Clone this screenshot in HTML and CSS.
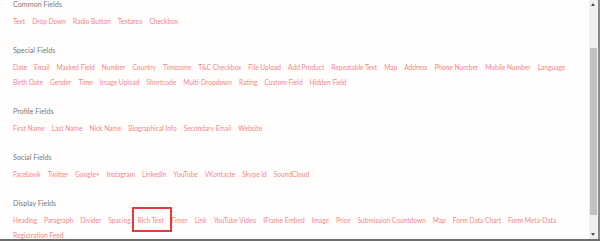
FILE: index.html
```html
<!DOCTYPE html>
<html>
<head>
<meta charset="utf-8">
<link rel="stylesheet" href="styles.css">
</head>
<body>
<div class="frame">
  <div class="content">
    <section class="group">
      <div class="title">Common Fields</div>
      <div class="items">
        <span>Text</span><span>Drop Down</span><span>Radio Button</span><span>Textarea</span><span>Checkbox</span>
      </div>
    </section>
    <section class="group">
      <div class="title">Special Fields</div>
      <div class="items">
        <span>Date</span><span>Email</span><span>Masked Field</span><span>Number</span><span>Country</span><span>Timezone</span><span>T&amp;C Checkbox</span><span>File Upload</span><span>Add Product</span><span>Repeatable Text</span><span>Map</span><span>Address</span><span>Phone Number</span><span>Mobile Number</span><span>Language</span><span>Birth Date</span><span>Gender</span><span>Time</span><span>Image Upload</span><span>Shortcode</span><span>Multi-Dropdown</span><span>Rating</span><span>Custom Field</span><span>Hidden Field</span>
      </div>
    </section>
    <section class="group">
      <div class="title">Profile Fields</div>
      <div class="items">
        <span>First Name</span><span>Last Name</span><span>Nick Name</span><span>Biographical Info</span><span>Secondary Email</span><span>Website</span>
      </div>
    </section>
    <section class="group">
      <div class="title">Social Fields</div>
      <div class="items">
        <span>Facebook</span><span>Twitter</span><span>Google+</span><span>Instagram</span><span>LinkedIn</span><span>YouTube</span><span>VKontacte</span><span>Skype Id</span><span>SoundCloud</span>
      </div>
    </section>
    <section class="group">
      <div class="title">Display Fields</div>
      <div class="items">
        <span>Heading</span><span>Paragraph</span><span>Divider</span><span>Spacing</span><span class="marked">Rich Text</span><span>Timer</span><span>Link</span><span>YouTube Video</span><span>IFrame Embed</span><span>Image</span><span>Price</span><span>Submission Countdown</span><span>Map</span><span>Form Data Chart</span><span>Form Meta-Data</span><span>Registration Feed</span>
      </div>
    </section>
  </div>
  <div class="scrollbar">
    <div class="arrow up"></div>
    <div class="track">
      <div class="thumb"></div>
    </div>
    <div class="arrow down"></div>
  </div>
</div>
</body>
</html>
```

FILE: styles.css
```css
html, body {
  margin: 0;
  padding: 0;
  background: #fff;
}
body {
  width: 600px;
  height: 241px;
  overflow: hidden;
  font-family: "Lato", "Noto Sans", sans-serif;
}
.frame {
  display: flex;
  height: 239px;
  border-bottom: 2px solid #6e6e6e;
}
.content {
  flex: 1;
  padding: 0 12px 0 13px;
  overflow: hidden;
  background: #fffefd;
}
.group {
  margin-bottom: 17px;
}
.title {
  font-size: 7.2px;
  line-height: 9px;
  color: #7a7a7a;
}
.items {
  margin-top: 5px;
  display: flex;
  flex-wrap: wrap;
  column-gap: 7px;
  font-size: 6.6px;
  line-height: 15px;
  color: #f3858c;
}
.items span {
  white-space: nowrap;
}
.marked {
  position: relative;
}
.marked::after {
  content: "";
  position: absolute;
  left: -6px;
  right: -8px;
  top: -6px;
  bottom: -4px;
  border: 2px solid #e53a40;
}
.scrollbar {
  width: 9px;
  display: flex;
  flex-direction: column;
  background: #f0f0f0;
  border-right: 2px solid #8a8a8a;
}
.arrow {
  height: 10px;
  position: relative;
}
.arrow::after {
  content: "";
  position: absolute;
  left: 2px;
  width: 0;
  height: 0;
  border-left: 2.5px solid transparent;
  border-right: 2.5px solid transparent;
}
.arrow.up::after {
  top: 3px;
  border-bottom: 3px solid #505050;
}
.arrow.down::after {
  top: 4px;
  border-top: 3px solid #505050;
}
.track {
  flex: 1;
  padding-top: 38px;
  padding-bottom: 14px;
  display: flex;
}
.thumb {
  flex: 1;
  margin: 0 1px;
  background: #c1c1c1;
}
```
